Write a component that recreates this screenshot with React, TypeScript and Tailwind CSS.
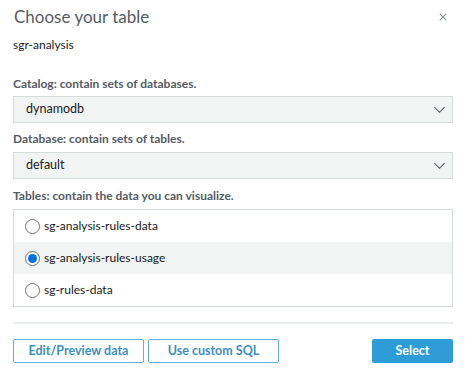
import { useState } from 'react';

const Chevron = () => (
  <svg className="w-[13px] h-[13px] text-[#545b64]" viewBox="0 0 14 14" fill="none" stroke="currentColor" strokeWidth="1.2">
    <path d="M1.5 4.5 7 10l5.5-5.5" />
  </svg>
);

const CloseIcon = () => (
  <svg className="w-[8px] h-[8px] text-[#879196]" viewBox="0 0 10 10" fill="none" stroke="currentColor" strokeWidth="1.4">
    <path d="M1 1l8 8M9 1 1 9" />
  </svg>
);

function SelectBox({ value }: { value: string }) {
  return (
    <div className="flex items-center justify-between h-[27px] bg-[#f2f3f3] border border-[#d5dbdb] pl-[12px] pr-[6px] text-[12.5px] text-[#16191f]">
      <span>{value}</span>
      <Chevron />
    </div>
  );
}

const tables = ['sg-analysis-rules-data', 'sg-analysis-rules-usage', 'sg-rules-data'];

export default function App() {
  const [picked, setPicked] = useState('sg-analysis-rules-usage');

  return (
    <div className="w-[474px] h-[376px] bg-white pl-[13px] pr-[21px] pt-[3px] text-[#545b64]" style={{ fontFamily: 'Lato, sans-serif' }}>
      {/* 헤더 */}
      <div className="flex items-start justify-between">
        <h1 className="ml-[1px] text-[17px] leading-[28px] text-[#545b64]">Choose your table</h1>
        <button className="mt-[10px] mr-[6px]"><CloseIcon /></button>
      </div>
      <div className="mt-[5px] text-[12px] leading-[18px] text-[#16191f]">sgr-analysis</div>

      <div className="mt-[21px] text-[12px] font-bold leading-[18px]">Catalog: contain sets of databases.</div>
      <div className="mt-[3px]"><SelectBox value="dynamodb" /></div>

      <div className="mt-[7px] text-[12px] font-bold leading-[18px]">Database: contain sets of tables.</div>
      <div className="mt-[4px]"><SelectBox value="default" /></div>

      <div className="mt-[8px] text-[12px] font-bold leading-[18px]">Tables: contain the data you can visualize.</div>
      <div className="mt-[4px] border border-[#d5dbdb]">
        {tables.map((t) => (
          <label
            key={t}
            className={`flex items-center h-[32px] pl-[11px] gap-[4px] text-[12px] text-[#16191f] ${picked === t ? 'bg-[#f2f3f3]' : ''}`}
          >
            <span className="w-[15px] h-[15px] rounded-full border border-[#687078] bg-white flex items-center justify-center">
              {picked === t && <span className="w-[9px] h-[9px] rounded-full bg-[#0073e6]" />}
            </span>
            <input type="radio" className="hidden" checked={picked === t} onChange={() => setPicked(t)} />
            <span>{t}</span>
          </label>
        ))}
      </div>

      <div className="mt-[15px] h-[2px] bg-[#eaeded]" />

      <div className="mt-[15px] flex items-center">
        <button className="w-[131px] h-[24px] border border-[#5fb0dc] rounded-[2px] text-[12.5px] font-bold text-[#3d8fbf]">Edit/Preview data</button>
        <button className="ml-[4px] w-[131px] h-[24px] border border-[#5fb0dc] rounded-[2px] text-[12.5px] font-bold text-[#3d8fbf]">Use custom SQL</button>
        <button className="ml-auto w-[81px] h-[24px] rounded-[2px] bg-[#2d9cd7] text-[12.5px] font-bold text-white">Select</button>
      </div>
    </div>
  );
}
